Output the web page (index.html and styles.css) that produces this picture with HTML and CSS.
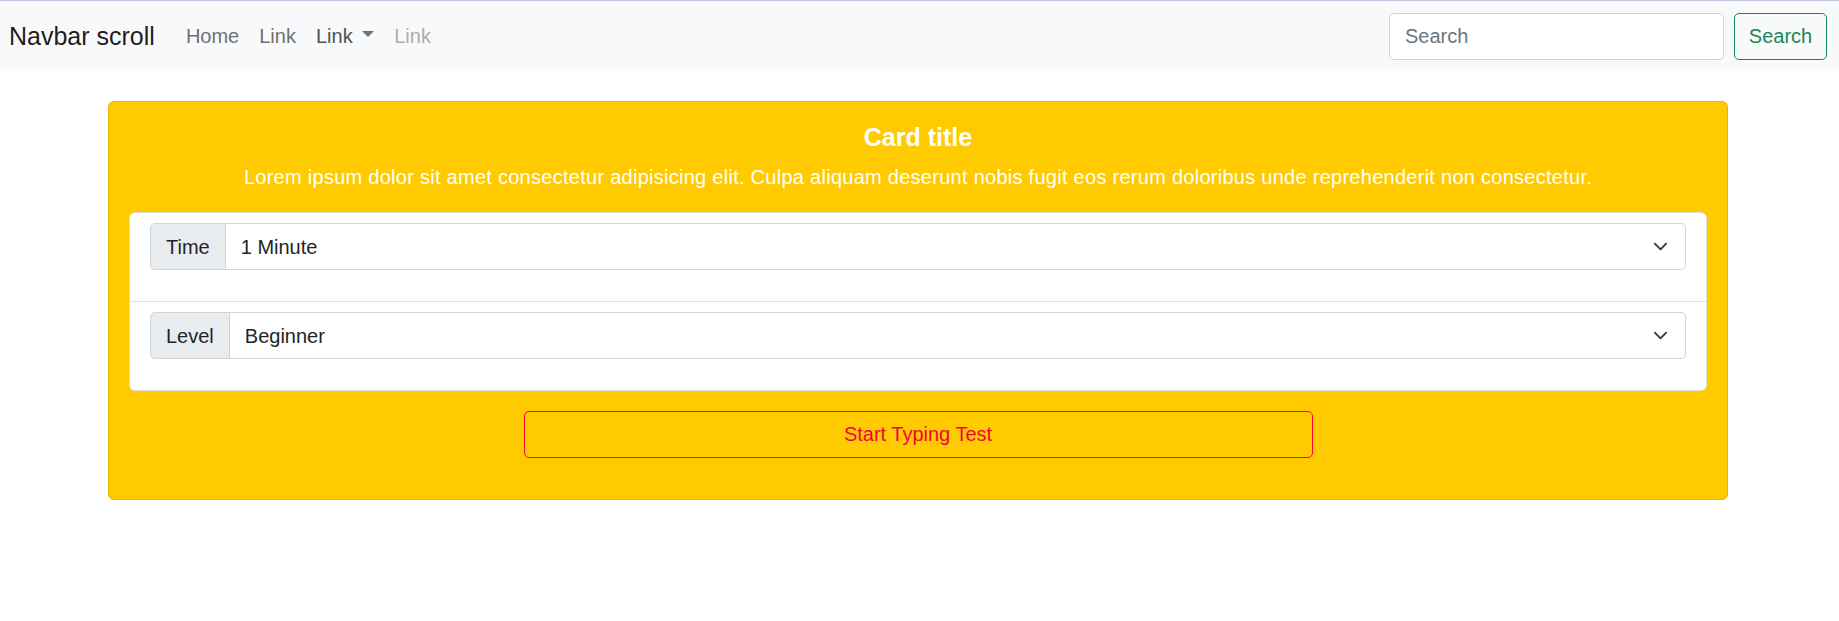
FILE: index.html
```html
<!DOCTYPE html>
<html lang="en">
<head>
<meta charset="utf-8">
<title>Typing Test</title>
<link rel="stylesheet" href="styles.css">
</head>
<body>
<nav class="navbar">
  <div class="nav-left">
    <a class="brand" href="#">Navbar scroll</a>
    <ul class="nav">
      <li><a class="nav-link" href="#">Home</a></li>
      <li><a class="nav-link" href="#">Link</a></li>
      <li><a class="nav-link dropdown" href="#">Link <span class="caret"></span></a></li>
      <li><a class="nav-link disabled" href="#">Link</a></li>
    </ul>
  </div>
  <form class="search">
    <input class="search-input" type="search" placeholder="Search">
    <button class="search-btn" type="button">Search</button>
  </form>
</nav>

<main class="container">
  <div class="card">
    <h5 class="card-title">Card title</h5>
    <p class="card-text">Lorem ipsum dolor sit amet consectetur adipisicing elit. Culpa aliquam deserunt nobis fugit eos rerum doloribus unde reprehenderit non consectetur.</p>
    <ul class="list-group">
      <li class="list-item">
        <div class="input-group">
          <span class="group-label">Time</span>
          <div class="select">
            <span>1 Minute</span>
            <svg class="chev" viewBox="0 0 16 16" width="15" height="15"><path d="m2 5 6 6 6-6" fill="none" stroke="#343a40" stroke-width="2" stroke-linecap="round" stroke-linejoin="round"/></svg>
          </div>
        </div>
      </li>
      <li class="list-item">
        <div class="input-group">
          <span class="group-label">Level</span>
          <div class="select">
            <span>Beginner</span>
            <svg class="chev" viewBox="0 0 16 16" width="15" height="15"><path d="m2 5 6 6 6-6" fill="none" stroke="#343a40" stroke-width="2" stroke-linecap="round" stroke-linejoin="round"/></svg>
          </div>
        </div>
      </li>
    </ul>
    <button class="start-btn" type="button">Start Typing Test</button>
  </div>
</main>
</body>
</html>
```
FILE: styles.css
```css
* { box-sizing: border-box; }

html, body {
  margin: 0;
  padding: 0;
  background: #ffffff;
}

body {
  font-family: "Liberation Sans", Arial, sans-serif;
  font-size: 20px;
  line-height: 1.5;
  color: #212529;
}

a { text-decoration: none; }

/* Navbar */
.navbar {
  height: 71px;
  background: #f8f9fa;
  border-top: 1px solid #c9c2de;
  display: flex;
  align-items: center;
  justify-content: space-between;
  padding: 0 12px 0 9px;
}

.nav-left {
  display: flex;
  align-items: center;
}

.brand {
  font-size: 25px;
  line-height: 30px;
  color: rgba(0, 0, 0, 0.9);
  margin-right: 21px;
}

.nav {
  display: flex;
  list-style: none;
  margin: 0;
  padding: 0;
}

.nav-link {
  display: block;
  padding: 0 10px;
  line-height: 30px;
  color: #6e7176;
}

.nav-link.dropdown { color: #4f5256; }

.nav-link.disabled { color: #abadb0; }

.caret {
  display: inline-block;
  width: 0;
  height: 0;
  margin-left: 4px;
  vertical-align: 6px;
  border-top: 6px solid #6f7175;
  border-left: 6px solid transparent;
  border-right: 6px solid transparent;
}

.search {
  display: flex;
  align-items: center;
  margin: 0;
}

.search-input {
  width: 335px;
  height: 47px;
  padding: 0 15px;
  border: 1px solid #ced4da;
  border-radius: 5px;
  background: #ffffff;
  font-family: inherit;
  font-size: 20px;
  color: #212529;
}

.search-input::placeholder { color: #6c757d; }

.search-btn {
  width: 93px;
  height: 47px;
  margin-left: 10px;
  border: 1px solid #198754;
  border-radius: 5px;
  background: transparent;
  color: #198754;
  font-family: inherit;
  font-size: 20px;
  padding: 0;
}

/* Main */
.container {
  max-width: 1649px;
  margin: 30px auto 0;
  padding: 0 16px 0 13px;
}

.card {
  background: #ffcb00;
  border: 1px solid #e3b600;
  border-radius: 6px;
  padding: 20px;
  text-align: center;
}

.card-title {
  margin: 0 0 10px;
  font-size: 25px;
  line-height: 30px;
  font-weight: 700;
  color: #ffffff;
}

.card-text {
  margin: 0 0 20px;
  line-height: 30px;
  letter-spacing: 0.27px;
  color: #ffffff;
}

.list-group {
  list-style: none;
  margin: 0;
  padding: 0;
  background: #ffffff;
  border: 1px solid #e2dccb;
  border-radius: 6px;
  text-align: left;
}

.list-item {
  padding: 10px 20px 11px;
}

.list-item + .list-item {
  border-top: 1px solid #dee2e6;
}

.input-group {
  display: flex;
  height: 47px;
  margin-bottom: 20px;
}

.group-label {
  display: flex;
  align-items: center;
  padding: 0 15px;
  background: #e9ecef;
  border: 1px solid #ced4da;
  border-radius: 5px 0 0 5px;
  color: #212529;
}

.select {
  flex: 1;
  display: flex;
  align-items: center;
  justify-content: space-between;
  padding: 0 17px 0 15px;
  background: #ffffff;
  border: 1px solid #ced4da;
  border-left: none;
  border-radius: 0 5px 5px 0;
  color: #212529;
}

.chev { display: block; }

.start-btn {
  display: block;
  width: 50%;
  height: 47px;
  margin: 20px auto 21px;
  border: 1px solid #ff0a2a;
  border-radius: 5px;
  background: transparent;
  color: #f0053a;
  font-family: inherit;
  font-size: 20px;
  padding: 0;
}
```
